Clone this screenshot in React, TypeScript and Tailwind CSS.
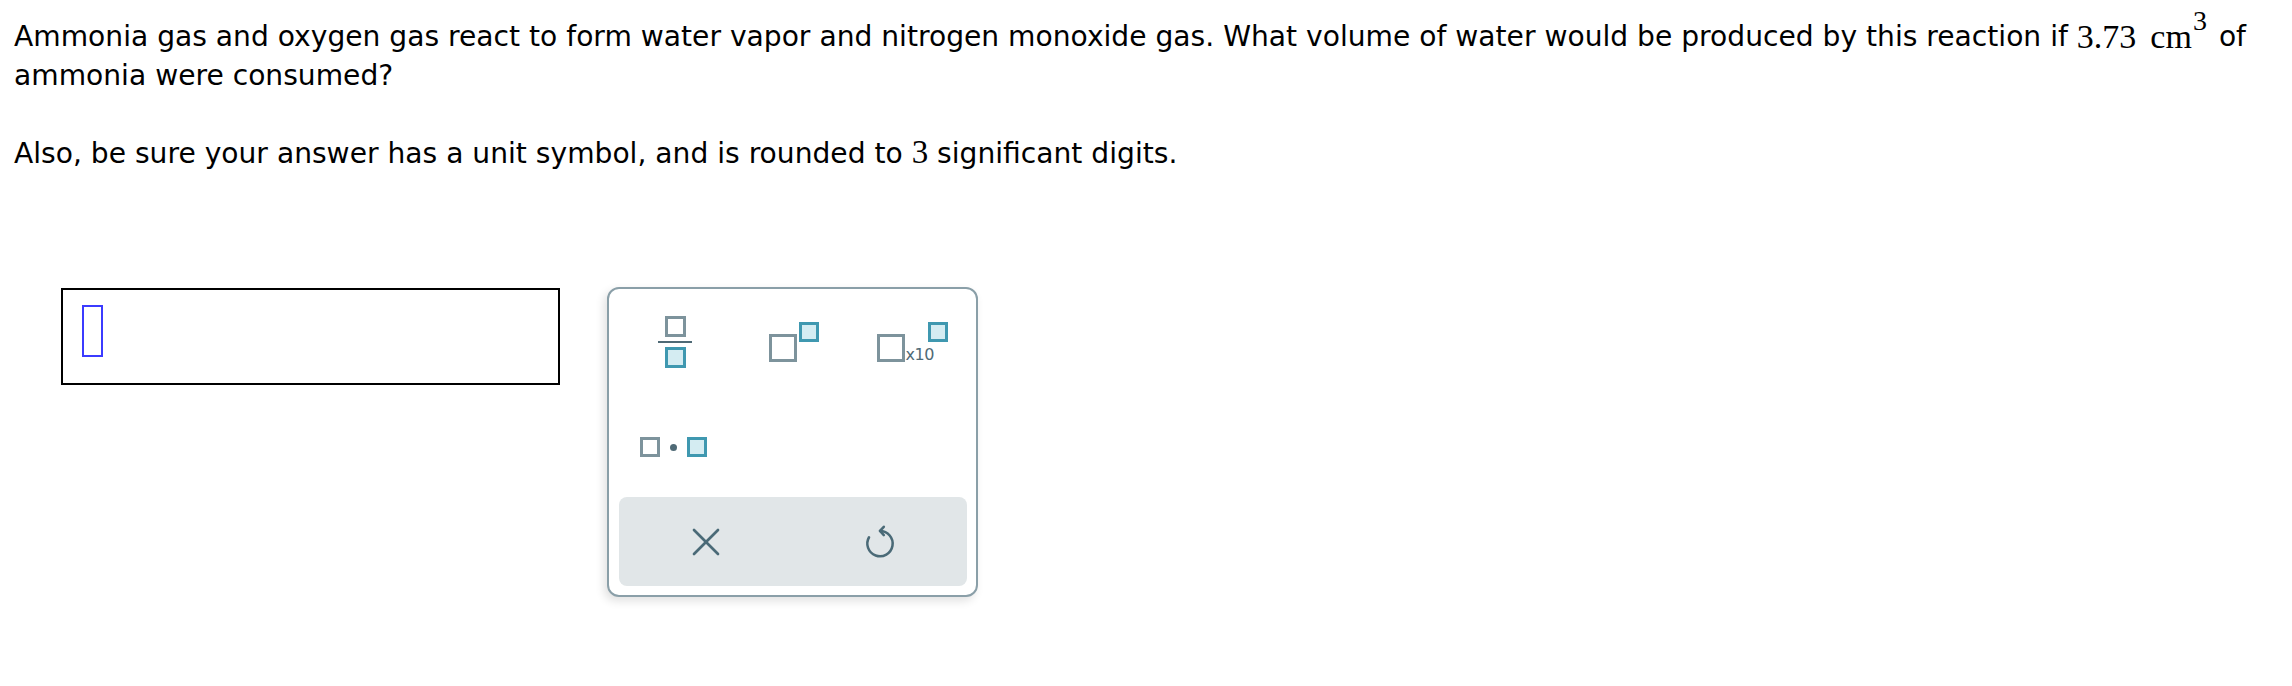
import React from 'react';

const Sq = ({ size, tone }: { size: number; tone: 'grey' | 'teal' }) => (
  <span
    className={
      tone === 'grey'
        ? 'block border-[3px] border-[#7d939c] bg-white'
        : 'block border-[3px] border-[#3f98b0] bg-[#d4ecf2]'
    }
    style={{ width: size, height: size }}
  />
);

const UndoIcon = () => (
  <svg width="38" height="38" viewBox="0 0 24 24" fill="none" stroke="#4a6a77" strokeWidth="1.6" strokeLinecap="round" strokeLinejoin="round">
    <path d="M12 5 A8 8 0 1 1 5.07 9" />
    <path d="M14.4 2.4 L12 5 L14.4 7.6" />
  </svg>
);

const CloseIcon = () => (
  <svg width="36" height="36" viewBox="0 0 24 24" fill="none" stroke="#4a6a77" strokeWidth="1.8" strokeLinecap="round">
    <path d="M4 4 L20 20" />
    <path d="M20 4 L4 20" />
  </svg>
);

const Keypad = () => (
  <div className="w-[371px] rounded-[12px] border-2 border-[#8a9fa8] bg-white shadow-[-3px_4px_10px_rgba(0,0,0,0.12)]">
    <div className="grid grid-cols-[118.5px_118.5px_118.5px] grid-rows-[100px_100px] gap-y-[5px] pl-[7px] pt-[3px]">
      {/* fraction */}
      <div className="flex items-center justify-center">
        <div className="flex flex-col items-center">
          <Sq size={21} tone="grey" />
          <span className="my-[4px] block h-[2px] w-[34px] bg-[#4f6a76]" />
          <Sq size={21} tone="teal" />
        </div>
      </div>
      {/* exponent */}
      <div className="flex items-center justify-center">
        <div className="flex items-start">
          <span className="mt-[12px]"><Sq size={28} tone="grey" /></span>
          <span className="ml-[2px]"><Sq size={20} tone="teal" /></span>
        </div>
      </div>
      {/* scientific notation */}
      <div className="flex items-center justify-center">
        <div className="flex items-start">
          <span className="mt-[12px]"><Sq size={28} tone="grey" /></span>
          <span className="mt-[25px] ml-[1px] font-['DejaVu_Sans',sans-serif] text-[16px] leading-[15px] tracking-[-0.5px] text-[#4f6a76]">x10</span>
          <span className="-ml-[6px]"><Sq size={20} tone="teal" /></span>
        </div>
      </div>
      {/* multiplication dot */}
      <div className="flex items-center justify-center">
        <div className="-ml-[3px] flex items-center">
          <Sq size={20} tone="grey" />
          <span className="mx-[10px] block h-[7px] w-[7px] rounded-full bg-[#4f6a76]" />
          <Sq size={20} tone="teal" />
        </div>
      </div>
    </div>
    <div className="px-[10px] pb-[9px] pt-0">
      <div className="grid h-[89px] w-[348px] grid-cols-2 rounded-[8px] bg-[#e1e6e8]">
        <button className="flex items-center justify-center">
          <CloseIcon />
        </button>
        <button className="flex items-center justify-center">
          <UndoIcon />
        </button>
      </div>
    </div>
  </div>
);

const Num = ({ children }: { children: React.ReactNode }) => (
  <span className="font-['Liberation_Serif',serif] text-[33px]">{children}</span>
);

export default function App() {
  return (
    <div className="min-h-[686px] w-full bg-white">
      <div className="px-[14px] pt-[17px] font-['DejaVu_Sans',sans-serif] text-[28.15px] leading-[39px] text-black">
        <p>
          Ammonia gas and oxygen gas react to form water vapor and nitrogen monoxide gas. What volume of water would be
          produced by this reaction if{' '}
          <span className="inline-block h-[39px] align-top font-['Liberation_Serif',serif] text-[34px] leading-[39px]">
            3.73<span className="ml-[14px]">cm</span>
            <span className="relative -top-[18px] ml-[1px] text-[28px]">3</span>
          </span>
          <span className="ml-[12px]">of</span> ammonia were consumed?
        </p>
        <p className="mt-[38px]">
          Also, be sure your answer has a unit symbol, and is rounded to <Num>3</Num> significant digits.
        </p>
      </div>
      <div className="mt-[114px] flex items-start pl-[61px]">
        <div className="mt-[1px] h-[97px] w-[499px] border-2 border-black bg-white">
          <div className="ml-[19px] mt-[15px] h-[52px] w-[21px] border-2 border-[#3b3bff]" />
        </div>
        <div className="ml-[47px]">
          <Keypad />
        </div>
      </div>
    </div>
  );
}
